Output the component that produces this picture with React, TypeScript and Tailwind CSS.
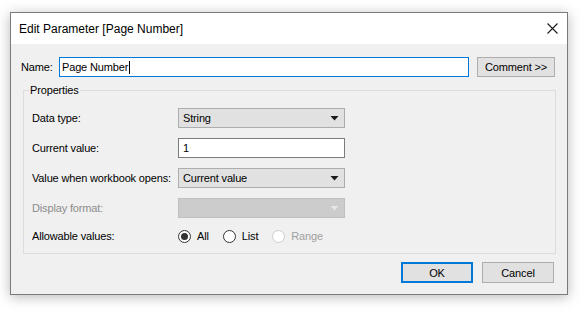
import React from 'react';

// Windows-style "Edit Parameter" dialog

const font = { fontFamily: '"Liberation Sans", Arial, sans-serif' };

function Arrow({ disabled = false }: { disabled?: boolean }) {
  return (
    <svg width="9" height="5" viewBox="0 0 9 5" className="shrink-0">
      <path d="M0.5 0 H8.5 L4.5 4.5 Z" fill={disabled ? '#e6e6e6' : '#1a1a1a'} />
    </svg>
  );
}

function Select({ value, disabled = false }: { value?: string; disabled?: boolean }) {
  return (
    <div
      className={
        disabled
          ? 'flex h-[20px] w-[167px] items-center justify-between border border-[#bfbfbf] bg-[#cccccc] pl-[4px] pr-[5px]'
          : 'flex h-[20px] w-[167px] items-center justify-between border border-[#adadad] bg-[#e1e1e1] pl-[4px] pr-[5px]'
      }
    >
      <span>{value}</span>
      <Arrow disabled={disabled} />
    </div>
  );
}

function Radio({ label, checked = false, disabled = false }: { label: string; checked?: boolean; disabled?: boolean }) {
  return (
    <div className="flex items-center gap-[6px]">
      <span
        className={
          disabled
            ? 'flex h-[13px] w-[13px] items-center justify-center rounded-full border border-[#cccccc] bg-white'
            : 'flex h-[13px] w-[13px] items-center justify-center rounded-full border border-[#333333] bg-white'
        }
      >
        {checked && <span className="h-[7px] w-[7px] rounded-full bg-[#333333]" />}
      </span>
      <span className={disabled ? 'text-[#a0a0a0]' : ''}>{label}</span>
    </div>
  );
}

function Row({
  label,
  disabled = false,
  className = '',
  children,
}: {
  label: string;
  disabled?: boolean;
  className?: string;
  children: React.ReactNode;
}) {
  return (
    <div className={`flex h-[20px] items-center ${className}`}>
      <span className={disabled ? 'w-[146px] text-[#8c8c8c]' : 'w-[146px]'}>{label}</span>
      {children}
    </div>
  );
}

export default function App() {
  return (
    <div
      className="h-[311px] w-[586px] overflow-hidden bg-white pl-[10px] pt-[12px] text-[11px] leading-[14px] tracking-[-0.15px] text-black"
      style={font}
    >
      <div className="flex h-[283px] w-[558px] flex-col border border-[#7a7a7a] bg-[#f0f0f0] shadow-[0_2px_12px_rgba(0,0,0,0.28)]">
        {/* Title bar */}
        <div className="flex h-[31px] items-center justify-between bg-white pl-[8px] pr-[9px]">
          <span className="text-[12px] tracking-normal">Edit Parameter [Page Number]</span>
          <svg width="11" height="11" viewBox="0 0 11 11">
            <path d="M0.5 0.5 L10.5 10.5 M10.5 0.5 L0.5 10.5" stroke="#1a1a1a" strokeWidth="1.1" />
          </svg>
        </div>

        {/* Body */}
        <div className="flex flex-1 flex-col pl-[10px] pr-[11px] pt-[13px]">
          <div className="flex items-center">
            <span className="w-[38px]">Name:</span>
            <div className="flex h-[20px] w-[410px] items-center border border-[#0078d7] bg-white pl-[2px]">
              <span>Page Number</span>
              <span className="ml-[1px] h-[13px] w-[1px] bg-black" />
            </div>
            <button className="ml-[8px] h-[20px] w-[78px] border border-[#adadad] bg-[#e1e1e1] text-center">
              Comment &gt;&gt;
            </button>
          </div>

          {/* Properties group */}
          <div className="relative ml-[2px] mt-[13px] flex w-[533px] flex-col gap-[10px] border border-[#dcdcdc] pb-[7px] pl-[8px] pt-[17px]">
            <span className="absolute left-[5px] top-[-8px] bg-[#f0f0f0] px-[1px]">Properties</span>
            <Row label="Data type:">
              <Select value="String" />
            </Row>
            <Row label="Current value:">
              <div className="flex h-[20px] w-[167px] items-center border border-[#7a7a7a] bg-white pl-[4px]">1</div>
            </Row>
            <Row label="Value when workbook opens:">
              <Select value="Current value" />
            </Row>
            <Row label="Display format:" disabled>
              <Select disabled />
            </Row>
            <Row label="Allowable values:" className="-mt-[2px]">
              <div className="flex items-center gap-[14px]">
                <Radio label="All" checked />
                <Radio label="List" />
                <Radio label="Range" disabled />
              </div>
            </Row>
          </div>

          {/* Footer buttons */}
          <div className="mt-[8px] flex justify-end gap-[9px] pr-[2px]">
            <button className="h-[21px] w-[72px] border-2 border-[#0078d7] bg-[#e1e1e1]">OK</button>
            <button className="h-[21px] w-[72px] border border-[#adadad] bg-[#e1e1e1]">Cancel</button>
          </div>
        </div>
      </div>
    </div>
  );
}
